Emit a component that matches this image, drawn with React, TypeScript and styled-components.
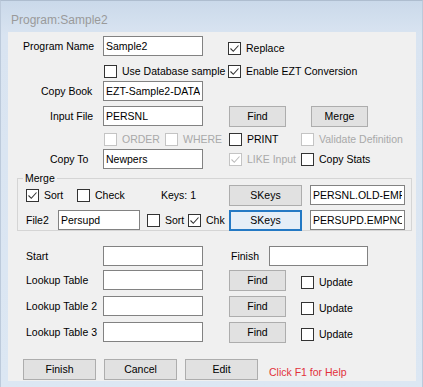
import React from 'react';
import styled, { createGlobalStyle } from 'styled-components';

const GlobalStyle = createGlobalStyle`
  html, body {
    margin: 0;
    padding: 0;
  }
  body {
    width: 423px;
    height: 387px;
    overflow: hidden;
    font-family: "Liberation Sans", Arial, sans-serif;
  }
`;

const FONT = `10.5px "Liberation Sans", Arial, sans-serif`;

const CheckMark: React.FC<{ color: string }> = ({ color }) => (
  <svg width="11" height="11" viewBox="0 0 11 11">
    <path d="M1.5 5.5 L4.3 8.3 L9.5 2.5" fill="none" stroke={color} strokeWidth="1.1" />
  </svg>
);

const CheckBox: React.FC<{
  label: string;
  checked?: boolean;
  disabled?: boolean;
  w?: number;
  dy?: number;
}> = ({ label, checked, disabled, w, dy }) => (
  <CheckWrap $w={w} $dy={dy} $disabled={disabled}>
    <Box $disabled={disabled}>{checked && <CheckMark color={disabled ? '#bcbcbc' : '#333'} />}</Box>
    <CheckText>{label}</CheckText>
  </CheckWrap>
);

export default function App() {
  return (
    <>
      <GlobalStyle />
      <Window>
        <TitleBar>Program:Sample2</TitleBar>
        <Client>
          <Row $mt={2}>
            <FieldLabel $w={95} $pl={15}>Program Name</FieldLabel>
            <TextBox value="Sample2" />
            <Gap $w={25} />
            <CheckBox label="Replace" checked dy={4} />
          </Row>

          <Row $mt={7} $h={16}>
            <Gap $w={96} />
            <CheckBox label="Use Database sample" w={124} />
            <CheckBox label="Enable EZT Conversion" checked />
          </Row>

          <Row $mt={2}>
            <FieldLabel $w={95} $pl={33}>Copy Book</FieldLabel>
            <TextBox value="EZT-Sample2-DATA" />
          </Row>

          <Row $mt={5}>
            <FieldLabel $w={95} $pl={42}>Input File</FieldLabel>
            <TextBox value="PERSNL" />
            <Gap $w={26} />
            <PushButton $w={57}>Find</PushButton>
            <Gap $w={25} />
            <PushButton $w={57}>Merge</PushButton>
          </Row>

          <Row $mt={5} $h={16}>
            <Gap $w={96} />
            <CheckBox label="ORDER" disabled w={61} />
            <CheckBox label="WHERE" disabled w={64} />
            <CheckBox label="PRINT" w={72} />
            <CheckBox label="Validate Definition" disabled />
          </Row>

          <Row $mt={2}>
            <FieldLabel $w={95} $pl={42}>Copy To</FieldLabel>
            <TextBox value="Newpers" />
            <Gap $w={26} />
            <CheckBox label="LIKE Input" checked disabled w={72} />
            <CheckBox label="Copy Stats" />
          </Row>

          <MergeGroup>
            <GroupCaption>Merge</GroupCaption>
            <Row $mt={1}>
              <Gap $w={8} />
              <CheckBox label="Sort" checked w={51} />
              <CheckBox label="Check" w={84} />
              <FieldLabel $w={68}>Keys: 1</FieldLabel>
              <PushButton $w={73}>SKeys</PushButton>
              <Gap $w={8} />
              <TextBox $w={95} value="PERSNL.OLD-EMP#" />
            </Row>
            <Row $mt={5}>
              <Gap $w={8} />
              <FieldLabel $w={32}>File2</FieldLabel>
              <TextBox $w={82} value="Persupd" />
              <Gap $w={7} />
              <CheckBox label="Sort" w={41} />
              <CheckBox label="Chk" checked w={41} />
              <PushButton $w={73} $focused>SKeys</PushButton>
              <Gap $w={8} />
              <TextBox $w={95} value="PERSUPD.EMPNO" />
            </Row>
          </MergeGroup>

          <Row $mt={15}>
            <FieldLabel $w={95} $pl={18}>Start</FieldLabel>
            <TextBox value="" />
            <Gap $w={26} />
            <FieldLabel $w={40} $pl={2}>Finish</FieldLabel>
            <TextBox $w={99} value="" />
          </Row>

          {['Lookup Table', 'Lookup Table 2', 'Lookup Table 3'].map((name, i) => (
            <Row key={name} $mt={i === 0 ? 4 : 6}>
              <FieldLabel $w={95} $pl={18}>{name}</FieldLabel>
              <TextBox value="" />
              <Gap $w={26} />
              <PushButton $w={57}>Find</PushButton>
              <Gap $w={15} />
              <CheckBox label="Update" dy={4} />
            </Row>
          ))}

          <Row $mt={17} $h={21}>
            <Gap $w={15} />
            <PushButton $w={73}>Finish</PushButton>
            <Gap $w={8} />
            <PushButton $w={73}>Cancel</PushButton>
            <Gap $w={8} />
            <PushButton $w={73}>Edit</PushButton>
            <Gap $w={11} />
            <HelpText>Click F1 for Help</HelpText>
          </Row>
        </Client>
      </Window>
    </>
  );
}

const Window = styled.div`
  width: 423px;
  height: 387px;
  box-sizing: border-box;
  background: linear-gradient(#cad9ea, #d9e4f1 34px, #dce7f3);
  border-top: 1px solid #aebdcf;
  border-left: 1px solid #bccadb;
  border-right: 1px solid #bccadb;
  display: flex;
  flex-direction: column;
`;

const TitleBar = styled.div`
  height: 31px;
  box-sizing: border-box;
  padding: 6px 0 0 10px;
  display: flex;
  align-items: center;
  font: 12px "Liberation Sans", Arial, sans-serif;
  color: #9a9a9a;
`;

const Client = styled.div`
  width: 408px;
  height: 349px;
  margin-left: 7px;
  box-sizing: border-box;
  padding-top: 2px;
  background: #f0f0f0;
  display: flex;
  flex-direction: column;
  font: ${FONT};
  color: #000;
`;

const Row = styled.div<{ $mt: number; $h?: number }>`
  display: flex;
  align-items: center;
  flex-shrink: 0;
  height: ${p => p.$h ?? 20}px;
  margin-top: ${p => p.$mt}px;
  white-space: nowrap;
`;

const Gap = styled.div<{ $w: number }>`
  width: ${p => p.$w}px;
  flex-shrink: 0;
`;

const FieldLabel = styled.div<{ $w: number; $pl?: number }>`
  width: ${p => p.$w}px;
  padding-left: ${p => p.$pl ?? 0}px;
  box-sizing: border-box;
  flex-shrink: 0;
  white-space: nowrap;
`;

const TextBox = styled.input.attrs({ type: 'text', readOnly: true })<{ $w?: number }>`
  width: ${p => p.$w ?? 100}px;
  height: 20px;
  box-sizing: border-box;
  flex-shrink: 0;
  margin: 0;
  padding: 0 2px;
  border: 1px solid #828282;
  border-radius: 0;
  background: #fff;
  font: ${FONT};
  color: #000;
  outline: none;
`;

const PushButton = styled.button<{ $w: number; $focused?: boolean }>`
  width: ${p => p.$w}px;
  height: 21px;
  box-sizing: border-box;
  flex-shrink: 0;
  margin: 0;
  padding: 0 0 1px;
  border: ${p => (p.$focused ? '2px solid #2479c4' : '1px solid #adadad')};
  border-radius: 0;
  background: ${p => (p.$focused ? '#e5eef7' : '#e1e1e1')};
  font: ${FONT};
  color: #000;
`;

const CheckWrap = styled.div<{ $w?: number; $dy?: number; $disabled?: boolean }>`
  display: flex;
  align-items: center;
  flex-shrink: 0;
  width: ${p => (p.$w ? `${p.$w}px` : 'auto')};
  margin-top: ${p => p.$dy ?? 0}px;
  color: ${p => (p.$disabled ? '#a9a9a9' : '#000')};
  white-space: nowrap;
`;

const Box = styled.div<{ $disabled?: boolean }>`
  width: 13px;
  height: 13px;
  box-sizing: border-box;
  flex-shrink: 0;
  border: 1px solid ${p => (p.$disabled ? '#c4c4c4' : '#333')};
  background: #fff;
  display: flex;
  align-items: center;
  justify-content: center;
`;

const CheckText = styled.span`
  margin-left: 5px;
`;

const MergeGroup = styled.fieldset`
  width: 395px;
  box-sizing: border-box;
  margin: 3px 0 0 9px;
  padding: 0;
  min-inline-size: 0;
  border: 1px solid #d5d5d5;
  flex-shrink: 0;
`;

const GroupCaption = styled.legend`
  margin-left: 5px;
  padding: 0 2px;
  line-height: 13px;
  font: ${FONT};
`;

const HelpText = styled.div`
  color: #e2303b;
  padding-top: 4px;
  white-space: nowrap;
`;
